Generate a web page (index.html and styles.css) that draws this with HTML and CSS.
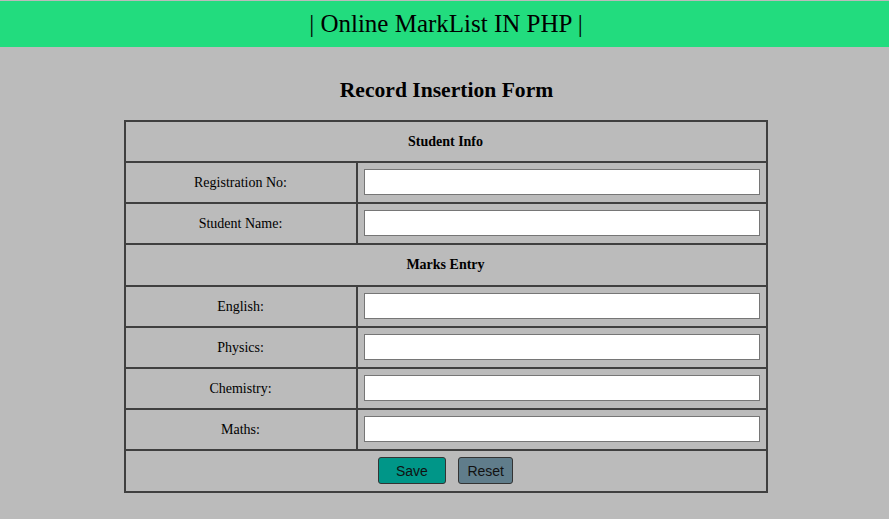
FILE: index.html
```html
<!DOCTYPE html>
<html>
<head>
<meta charset="utf-8">
<title>Online MarkList IN PHP</title>
<link rel="stylesheet" href="styles.css">
</head>
<body>
<header class="topbar">| Online MarkList IN PHP |</header>
<main class="content">
  <h2 class="title">Record Insertion Form</h2>
  <form class="form">
    <table class="grid">
      <tr><th colspan="2" class="section">Student Info</th></tr>
      <tr><td class="label">Registration No:</td><td class="field"><input type="text" class="inp"></td></tr>
      <tr><td class="label">Student Name:</td><td class="field"><input type="text" class="inp"></td></tr>
      <tr><th colspan="2" class="section tall">Marks Entry</th></tr>
      <tr><td class="label">English:</td><td class="field"><input type="text" class="inp"></td></tr>
      <tr><td class="label">Physics:</td><td class="field"><input type="text" class="inp"></td></tr>
      <tr><td class="label">Chemistry:</td><td class="field"><input type="text" class="inp"></td></tr>
      <tr><td class="label">Maths:</td><td class="field"><input type="text" class="inp"></td></tr>
      <tr><td colspan="2" class="actions">
        <button type="button" class="btn btn-save">Save</button>
        <button type="button" class="btn btn-reset">Reset</button>
      </td></tr>
    </table>
  </form>
</main>
</body>
</html>
```
FILE: styles.css
```css
html, body {
  margin: 0;
  padding: 0;
  background: #bbbbbb;
  font-family: "Liberation Serif", "Times New Roman", serif;
  color: #000;
}
body {
  padding-top: 1px;
}
.topbar {
  background: #22dc7e;
  height: 46px;
  line-height: 46px;
  text-align: center;
  font-size: 25px;
  padding-left: 3px;
}
.content {
  padding-top: 30px;
  padding-left: 2px;
}
.title {
  margin: 0 0 17px;
  padding-left: 2px;
  text-align: center;
  font-size: 21.6px;
  font-weight: bold;
  line-height: 26px;
}
.form {
  margin: 0;
}
.grid {
  width: 644px;
  margin: 0 auto;
  border-collapse: collapse;
  border: 2px solid #3f3f3f;
}
.grid th, .grid td {
  border: 2px solid #3f3f3f;
  height: 39px;
  padding: 0 6px;
  font-size: 14px;
  text-align: center;
}
.grid .tall {
  height: 40px;
}
.section {
  font-weight: bold;
}
.label {
  width: 219px;
}
.field {
  text-align: left;
}
.inp {
  display: block;
  box-sizing: border-box;
  width: 396px;
  height: 26px;
  margin: -1px 0 0;
  border: 1px solid #767676;
  background: #fff;
  padding: 1px 2px;
}
.grid .actions {
  height: 38px;
  padding-top: 0;
  padding-bottom: 2px;
  line-height: 27px;
}
.btn {
  font-family: "Liberation Sans", Arial, sans-serif;
  font-size: 14px;
  height: 27px;
  vertical-align: middle;
  border: 1px solid #333;
  border-radius: 3px;
  color: #111;
  padding: 0 17px;
  margin: 0 4.5px;
}
.btn-save {
  background: #009688;
}
.btn-reset {
  background: #607d8b;
  padding: 0 8px;
}
```
